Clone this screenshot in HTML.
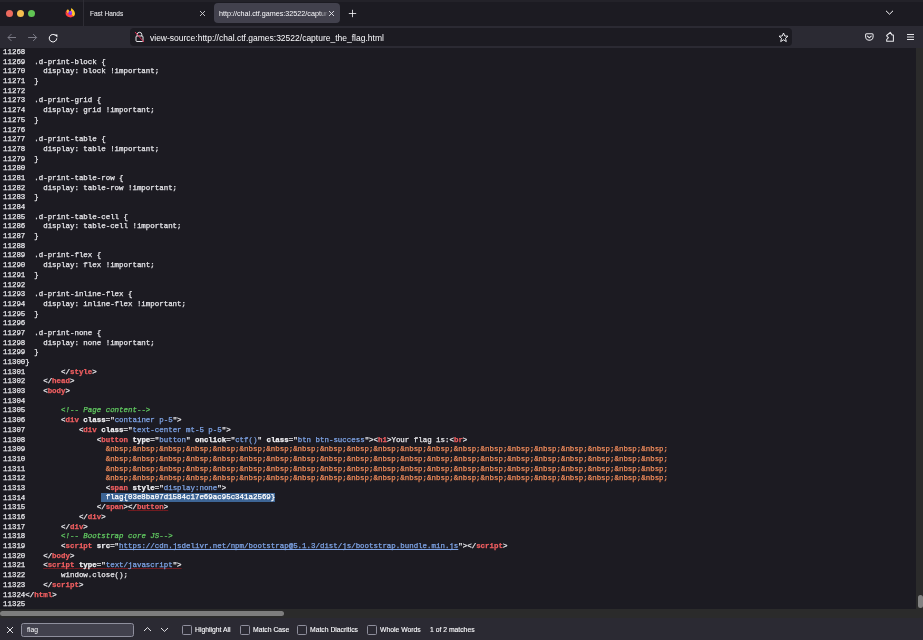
<!DOCTYPE html>
<html><head><meta charset="utf-8">
<style>
html,body{margin:0;padding:0;}
body{width:923px;height:640px;overflow:hidden;position:relative;background:#1c1b22;font-family:"Liberation Sans",sans-serif;}
.abs{position:absolute;}
.gs{will-change:transform;}
#tabbar{left:0;top:0;width:923px;height:26px;background:#1c1b22;}
#topstrip{left:0;top:0;width:923px;height:2px;background:#232229;}
.dot{position:absolute;width:7px;height:7px;border-radius:50%;top:9.5px;}
#sep{left:83px;top:0;width:1px;height:26px;background:#2e2d35;}
#tab1t{left:90px;top:9.9px;font-size:6.5px;color:#e0e0e4;-webkit-text-stroke:0.1px #e0e0e4;white-space:nowrap;}
#seltab{left:214px;top:3px;width:126px;height:20px;background:#42414d;border-radius:4px;}
#seltabt{left:219px;top:8.8px;width:110px;overflow:hidden;font-size:7.2px;color:#fbfbfe;white-space:nowrap;-webkit-mask-image:linear-gradient(90deg,#000 0,#000 100px,transparent 110px);}
#navbar{left:0;top:26px;width:923px;height:22px;background:#2b2a33;}
#urlbar{left:130.2px;top:28.2px;width:661.8px;height:17.5px;background:#1c1b22;border-radius:4px;}
#urlt{left:150px;top:32.5px;font-size:8.5px;color:#fbfbfe;white-space:nowrap;}
#content{left:0;top:48px;width:916px;height:561px;background:#1c1b22;overflow:hidden;}
#vscroll{left:916px;top:48px;width:7px;height:561px;background:#2b2b2b;}
#vthumb{left:918px;top:595px;width:4.5px;height:13px;background:#828282;border-radius:3px;}
#hscroll{left:0;top:608.6px;width:923px;height:9.8px;background:#2b2b2b;}
#hthumb{left:0;top:611px;width:284px;height:5px;background:#7d7d7d;border-radius:3px;}
#findbar{left:0;top:618.4px;width:923px;height:21.6px;background:#2b2a33;}
#findfield{left:21px;top:622.8px;width:113px;height:13.9px;box-sizing:border-box;background:#42414d;border:1px solid #8f8f9d;border-radius:2.5px;}
#findt{left:26.5px;top:625.5px;font-size:6.8px;color:#fbfbfe;}
.cb{position:absolute;top:624.8px;width:9.8px;height:9.8px;box-sizing:border-box;border:1px solid #8f8f9d;border-radius:1.5px;background:#2b2a33;}
.fl{position:absolute;top:626px;font-size:6.8px;color:#fbfbfe;white-space:nowrap;-webkit-text-stroke:0.12px #fbfbfe;}
/* code */
#code{will-change:transform;position:absolute;left:3.3px;top:48.3px;font-family:"Liberation Mono",monospace;font-size:7.44px;line-height:9.695px;color:#e6e6ea;white-space:pre;-webkit-text-stroke:0.25px currentColor;}
.ln{height:9.695px;}
.ln i{font-style:normal;color:#e6e6ea;}
.tg{color:#ee5e60;font-weight:bold;}
.an{color:#f0f0f4;font-weight:bold;}
.av{color:#7ea4e6;}
.cm{color:#62cc62;font-style:italic;}
.en{color:#ee8a5a;}
.lk{color:#7ea4e6;text-decoration:underline;}
.hl{background:#3d6595;color:#ffffff;padding:0.4px 0;}
.err{text-decoration:underline solid #701b20;text-decoration-thickness:0.8px;text-underline-offset:1.3px;-webkit-text-stroke:0.25px currentColor;}
</style></head><body>
<div id="tabbar" class="abs"></div>
<div id="topstrip" class="abs"></div>
<div class="dot" style="left:5.6px;background:#ec6a5e;"></div>
<div class="dot" style="left:17px;background:#f4bf4f;"></div>
<div class="dot" style="left:28.4px;background:#61c554;"></div>
<svg class="abs" style="left:64px;top:6px" width="13" height="13" viewBox="0 0 13 13">
  <path d="M1.5 6.6A4.75 4.75 0 0 0 10.9 7.6L6.3 7Z" fill="#ff4040"/>
  <path d="M1.5 6.6C1.6 5.6 2.1 4.6 2.9 3.9L5.8 6.5L6.3 7Z" fill="#ff4a3c"/>
  <path d="M7.4 1.9C8.6 3.2 11 4.6 10.95 7.4C10.9 8.6 10.4 9.6 9.6 10.4L6.3 7Z" fill="#ffc928"/>
  <path d="M2.9 3.9C3.5 3.3 4.2 3.3 4.6 3.9L6.3 6.6L3.2 6.9Z" fill="#ffbd2e"/>
  <circle cx="6.3" cy="7" r="1.9" fill="#7a3cf4"/>
  <path d="M5.6 5.2A1.9 1.9 0 0 1 8.2 6.6L6.3 7Z" fill="#b443f0"/>
</svg>
<div id="sep" class="abs"></div>
<div id="tab1t" class="abs gs">Fast Hands</div>
<svg class="abs" style="left:199px;top:9.5px" width="7" height="7" viewBox="0 0 7 7"><path d="M1 1L6 6M6 1L1 6" stroke="#d0d0d6" stroke-width="0.9"/></svg>
<div id="seltab" class="abs"></div>
<div id="seltabt" class="abs gs">http://chal.ctf.games:32522/capture_the_flag.html</div>
<svg class="abs" style="left:328px;top:9.5px" width="7" height="7" viewBox="0 0 7 7"><path d="M1 1L6 6M6 1L1 6" stroke="#e8e8ee" stroke-width="0.9"/></svg>
<svg class="abs" style="left:348px;top:9px" width="9" height="9" viewBox="0 0 9 9"><path d="M4.5 0.8V8.2M0.8 4.5H8.2" stroke="#fbfbfe" stroke-width="0.8"/></svg>
<svg class="abs" style="left:885.4px;top:9px" width="9" height="7" viewBox="0 0 9 7"><path d="M1 1.8L4.5 5.2L8 1.8" fill="none" stroke="#fbfbfe" stroke-width="1"/></svg>

<div id="navbar" class="abs"></div>
<svg class="abs" style="left:6px;top:32px" width="12" height="11" viewBox="0 0 12 11"><path d="M2 5.5H10M5.5 2L2 5.5L5.5 9" fill="none" stroke="#7f7f8b" stroke-width="0.95"/></svg>
<svg class="abs" style="left:27px;top:32px" width="12" height="11" viewBox="0 0 12 11"><path d="M1.1 5.5H9.6M6.1 2L9.6 5.5L6.1 9" fill="none" stroke="#7f7f8b" stroke-width="0.95"/></svg>
<svg class="abs" style="left:47px;top:31.5px" width="12" height="12" viewBox="0 0 12 12"><path d="M9.75 6.3A3.75 3.75 0 1 1 8.4 3.3" fill="none" stroke="#fbfbfe" stroke-width="1"/><path d="M7.3 2.4H10.4V5.5Z" fill="#fbfbfe"/></svg>
<div id="urlbar" class="abs"></div>
<svg class="abs" style="left:134px;top:31px" width="11" height="12" viewBox="0 0 11 12"><path d="M3.2 5V3.6A2.3 2.3 0 0 1 7.8 3.6V5" fill="none" stroke="#fbfbfe" stroke-width="0.9"/><rect x="2" y="5" width="7" height="5.5" rx="1" fill="none" stroke="#fbfbfe" stroke-width="0.9"/><path d="M1 1L10 11" stroke="#e22850" stroke-width="1"/></svg>
<div id="urlt" class="abs gs">view-source:http://chal.ctf.games:32522/capture_the_flag.html</div>
<svg class="abs" style="left:777.6px;top:32px" width="11" height="11" viewBox="0 0 11 11"><path d="M5.5 1L6.8 4L10 4.2L7.5 6.3L8.3 9.6L5.5 7.8L2.7 9.6L3.5 6.3L1 4.2L4.2 4Z" fill="none" stroke="#fbfbfe" stroke-width="0.9" stroke-linejoin="round"/></svg>
<svg class="abs" style="left:862px;top:29px" width="16" height="16" viewBox="0 0 16 16"><path d="M4.6 4.8H10.1A1 1 0 0 1 11.1 5.8V7.6A3.75 3.7 0 0 1 3.6 7.6V5.8A1 1 0 0 1 4.6 4.8Z" fill="none" stroke="#e8e8ec" stroke-width="1.05" stroke-linejoin="round"/><path d="M5.5 7.2L7.35 8.8L9.2 7.2" fill="none" stroke="#e8e8ec" stroke-width="1.1" stroke-linecap="round" stroke-linejoin="round"/></svg>
<svg class="abs" style="left:882px;top:29px" width="16" height="16" viewBox="0 0 16 16"><path d="M8.25 3.4L10 5.9H11.4V12.3H4.7V10.5L6.4 8.7L4.7 7V6.5Z" fill="none" stroke="#e8e8ec" stroke-width="1.05" stroke-linejoin="round"/></svg>
<svg class="abs" style="left:905px;top:31px" width="11" height="11" viewBox="0 0 11 11"><path d="M2 3.5H9M2 6H9M2 8.5H9" stroke="#fbfbfe" stroke-width="0.9"/></svg>

<div id="content" class="abs"></div>
<div id="code"><div class="ln"><i>11268</i></div><div class="ln"><i>11269</i>  .d-print-block {</div><div class="ln"><i>11270</i>    display: block !important;</div><div class="ln"><i>11271</i>  }</div><div class="ln"><i>11272</i></div><div class="ln"><i>11273</i>  .d-print-grid {</div><div class="ln"><i>11274</i>    display: grid !important;</div><div class="ln"><i>11275</i>  }</div><div class="ln"><i>11276</i></div><div class="ln"><i>11277</i>  .d-print-table {</div><div class="ln"><i>11278</i>    display: table !important;</div><div class="ln"><i>11279</i>  }</div><div class="ln"><i>11280</i></div><div class="ln"><i>11281</i>  .d-print-table-row {</div><div class="ln"><i>11282</i>    display: table-row !important;</div><div class="ln"><i>11283</i>  }</div><div class="ln"><i>11284</i></div><div class="ln"><i>11285</i>  .d-print-table-cell {</div><div class="ln"><i>11286</i>    display: table-cell !important;</div><div class="ln"><i>11287</i>  }</div><div class="ln"><i>11288</i></div><div class="ln"><i>11289</i>  .d-print-flex {</div><div class="ln"><i>11290</i>    display: flex !important;</div><div class="ln"><i>11291</i>  }</div><div class="ln"><i>11292</i></div><div class="ln"><i>11293</i>  .d-print-inline-flex {</div><div class="ln"><i>11294</i>    display: inline-flex !important;</div><div class="ln"><i>11295</i>  }</div><div class="ln"><i>11296</i></div><div class="ln"><i>11297</i>  .d-print-none {</div><div class="ln"><i>11298</i>    display: none !important;</div><div class="ln"><i>11299</i>  }</div><div class="ln"><i>11300</i>}</div><div class="ln"><i>11301</i>        &lt;/<span class="tg">style</span>&gt;</div><div class="ln"><i>11302</i>    &lt;/<span class="tg">head</span>&gt;</div><div class="ln"><i>11303</i>    &lt;<span class="tg">body</span>&gt;</div><div class="ln"><i>11304</i></div><div class="ln"><i>11305</i>        <span class="cm">&lt;!-- Page content--&gt;</span></div><div class="ln"><i>11306</i>        &lt;<span class="tg">div</span> <span class="an">class</span>="<span class="av">container p-5</span>"&gt;</div><div class="ln"><i>11307</i>            &lt;<span class="tg">div</span> <span class="an">class</span>="<span class="av">text-center mt-5 p-5</span>"&gt;</div><div class="ln"><i>11308</i>                &lt;<span class="tg">button</span> <span class="an">type</span>="<span class="av">button</span>" <span class="an">onclick</span>="<span class="av">ctf()</span>" <span class="an">class</span>="<span class="av">btn btn-success</span>"&gt;&lt;<span class="tg">h1</span>&gt;Your flag is:&lt;<span class="tg">br</span>&gt;</div><div class="ln"><i>11309</i>                  <span class="en">&amp;nbsp;&amp;nbsp;&amp;nbsp;&amp;nbsp;&amp;nbsp;&amp;nbsp;&amp;nbsp;&amp;nbsp;&amp;nbsp;&amp;nbsp;&amp;nbsp;&amp;nbsp;&amp;nbsp;&amp;nbsp;&amp;nbsp;&amp;nbsp;&amp;nbsp;&amp;nbsp;&amp;nbsp;&amp;nbsp;&amp;nbsp;</span></div><div class="ln"><i>11310</i>                  <span class="en">&amp;nbsp;&amp;nbsp;&amp;nbsp;&amp;nbsp;&amp;nbsp;&amp;nbsp;&amp;nbsp;&amp;nbsp;&amp;nbsp;&amp;nbsp;&amp;nbsp;&amp;nbsp;&amp;nbsp;&amp;nbsp;&amp;nbsp;&amp;nbsp;&amp;nbsp;&amp;nbsp;&amp;nbsp;&amp;nbsp;&amp;nbsp;</span></div><div class="ln"><i>11311</i>                  <span class="en">&amp;nbsp;&amp;nbsp;&amp;nbsp;&amp;nbsp;&amp;nbsp;&amp;nbsp;&amp;nbsp;&amp;nbsp;&amp;nbsp;&amp;nbsp;&amp;nbsp;&amp;nbsp;&amp;nbsp;&amp;nbsp;&amp;nbsp;&amp;nbsp;&amp;nbsp;&amp;nbsp;&amp;nbsp;&amp;nbsp;&amp;nbsp;</span></div><div class="ln"><i>11312</i>                  <span class="en">&amp;nbsp;&amp;nbsp;&amp;nbsp;&amp;nbsp;&amp;nbsp;&amp;nbsp;&amp;nbsp;&amp;nbsp;&amp;nbsp;&amp;nbsp;&amp;nbsp;&amp;nbsp;&amp;nbsp;&amp;nbsp;&amp;nbsp;&amp;nbsp;&amp;nbsp;&amp;nbsp;&amp;nbsp;&amp;nbsp;&amp;nbsp;</span></div><div class="ln"><i>11313</i>                  &lt;<span class="tg">span</span> <span class="an">style</span>="<span class="av">display:none</span>"&gt;</div><div class="ln"><i>11314</i>                 <span class="hl"> flag{03e8ba07d1584c17e69ac95c341a2569}</span></div><div class="ln"><i>11315</i>                &lt;/<span class="tg">span</span>&gt;<span class="err">&lt;/<span class="tg">button</span>&gt;</span></div><div class="ln"><i>11316</i>            &lt;/<span class="tg">div</span>&gt;</div><div class="ln"><i>11317</i>        &lt;/<span class="tg">div</span>&gt;</div><div class="ln"><i>11318</i>        <span class="cm">&lt;!-- Bootstrap core JS--&gt;</span></div><div class="ln"><i>11319</i>        &lt;<span class="tg">script</span> <span class="an">src</span>="<span class="lk">https://cdn.jsdelivr.net/npm/bootstrap@5.1.3/dist/js/bootstrap.bundle.min.js</span>"&gt;&lt;/<span class="tg">script</span>&gt;</div><div class="ln"><i>11320</i>    &lt;/<span class="tg">body</span>&gt;</div><div class="ln"><i>11321</i>    <span class="err">&lt;<span class="tg">script</span> <span class="an">type</span>="<span class="av">text/javascript</span>"&gt;</span></div><div class="ln"><i>11322</i>        window.close();</div><div class="ln"><i>11323</i>    &lt;/<span class="tg">script</span>&gt;</div><div class="ln"><i>11324</i>&lt;/<span class="tg">html</span>&gt;</div><div class="ln"><i>11325</i></div></div>
<div id="vscroll" class="abs"></div>
<div id="vthumb" class="abs"></div>
<div id="hscroll" class="abs"></div>
<div id="hthumb" class="abs"></div>

<div id="findbar" class="abs"></div>
<svg class="abs" style="left:5.5px;top:625.5px" width="8" height="8" viewBox="0 0 8 8"><path d="M1 1L7 7M7 1L1 7" stroke="#fbfbfe" stroke-width="0.9"/></svg>
<div id="findfield" class="abs"></div>
<div id="findt" class="abs gs">flag</div>
<svg class="abs" style="left:143px;top:626px" width="9" height="7" viewBox="0 0 9 7"><path d="M1 5L4.5 1.6L8 5" fill="none" stroke="#fbfbfe" stroke-width="0.9"/></svg>
<svg class="abs" style="left:160px;top:626px" width="9" height="7" viewBox="0 0 9 7"><path d="M1 2L4.5 5.4L8 2" fill="none" stroke="#fbfbfe" stroke-width="0.9"/></svg>
<div class="cb" style="left:182px"></div><div class="fl gs" style="left:195px">Highlight All</div>
<div class="cb" style="left:240px"></div><div class="fl gs" style="left:252.8px">Match Case</div>
<div class="cb" style="left:297.2px"></div><div class="fl gs" style="left:309.6px">Match Diacritics</div>
<div class="cb" style="left:367.3px"></div><div class="fl gs" style="left:379.8px">Whole Words</div>
<div class="fl gs" style="left:430.4px">1 of 2 matches</div>
</body></html>
